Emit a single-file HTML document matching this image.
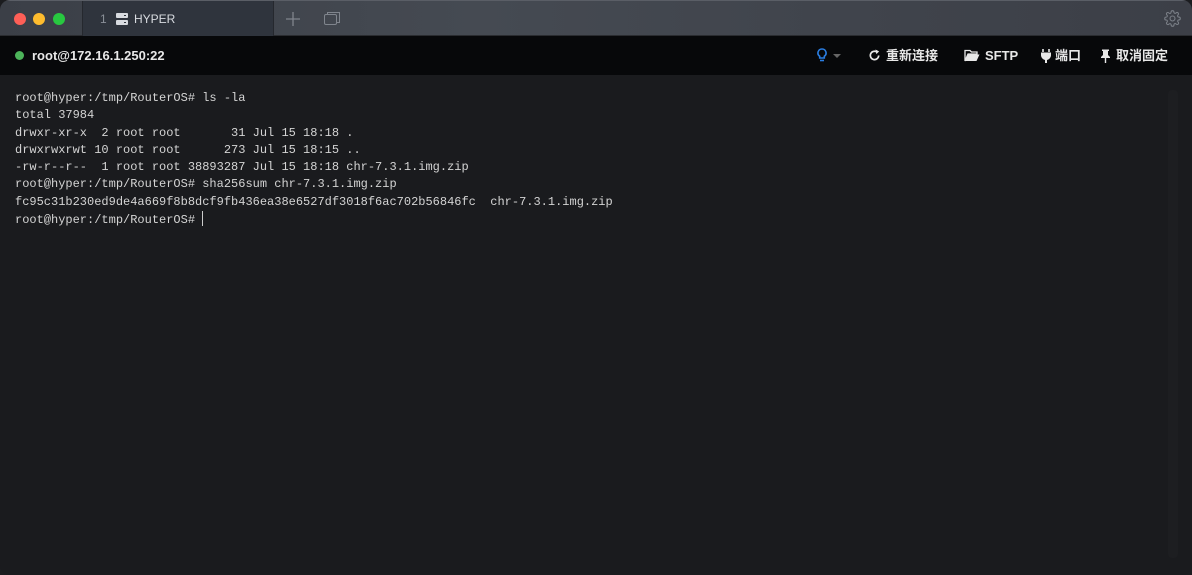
<!DOCTYPE html>
<html><head><meta charset="utf-8"><style>
*{margin:0;padding:0;box-sizing:border-box}
html,body{width:1192px;height:575px;overflow:hidden;background:#1b1c1f}
.win{position:absolute;left:0;top:0;width:1192px;height:575px;border-radius:10px;overflow:hidden;background:#1a1b1e}
.title{position:absolute;left:0;top:0;width:1192px;height:36px;background:linear-gradient(90deg,#3b3f47,#454a52 40%,#40444c 70%,#3c3f47);border-bottom:1px solid #2a2c30;border-top:1px solid #5a5e66}
.dot{position:absolute;top:12px;width:12px;height:12px;border-radius:50%}
.tab{position:absolute;left:82px;top:0;width:192px;height:37px;background:#2f343d;border-left:1px solid #25282e;border-right:1px solid #25282e;font:12px "Liberation Sans",sans-serif;color:#d8dbe0}
.bar{position:absolute;left:0;top:36px;width:1192px;height:39px;background:#07080a;font:bold 13px/17px "Liberation Sans","Noto Sans CJK SC",sans-serif;color:#e8e8e8}
.term{position:absolute;left:15px;top:90px;font:12px/17.3px "Liberation Mono",monospace;color:#d4d4d4;white-space:pre}
.sb{position:absolute;left:1168px;top:90px;width:10px;height:468px;background:#1d1e21;border-radius:4px}
.it{position:absolute;top:11px;height:17px}
.it svg{position:absolute;top:2px;left:0}
.it span{position:absolute;top:0;white-space:nowrap;line-height:17px;height:17px;display:block}
</style></head><body><div class="win">
<div class="title">
<div class="dot" style="left:14px;background:#fe5f57"></div>
<div class="dot" style="left:33px;background:#febc2e"></div>
<div class="dot" style="left:53px;background:#28c840"></div>
<div class="tab"><span style="position:absolute;left:17px;top:11px;color:#8a8f98">1</span>
<svg style="position:absolute;left:33px;top:12px" width="12" height="12"><rect x="0" y="0" width="12" height="5" rx="1" fill="#d8dbe0"/><rect x="0" y="7" width="12" height="5" rx="1" fill="#d8dbe0"/><rect x="8" y="2" width="2" height="1" fill="#2f343d"/><rect x="8" y="9" width="2" height="1" fill="#2f343d"/></svg>
<span style="position:absolute;left:51px;top:11px">HYPER</span></div>
<svg style="position:absolute;left:286px;top:11px" width="14" height="14"><path d="M7 0V14M0 7H14" stroke="#80858d" stroke-width="1.3"/></svg>
<svg style="position:absolute;left:324px;top:10px" width="16" height="15"><rect x="0.5" y="3.5" width="12" height="10" rx="1.5" fill="none" stroke="#80858d"/><path d="M3.5 3.5V1.5H15.5V11.5H12.5" fill="none" stroke="#80858d"/></svg>
<svg style="position:absolute;left:1164px;top:9px" width="17" height="17" viewBox="0 0 24 24"><path d="M12 15.5a3.5 3.5 0 1 0 0-7 3.5 3.5 0 0 0 0 7z M19.4 15a1.7 1.7 0 0 0 .3 1.8l.1.1a2 2 0 1 1-2.8 2.8l-.1-.1a1.7 1.7 0 0 0-1.8-.3 1.7 1.7 0 0 0-1 1.5V21a2 2 0 1 1-4 0v-.1a1.7 1.7 0 0 0-1.1-1.5 1.7 1.7 0 0 0-1.8.3l-.1.1a2 2 0 1 1-2.8-2.8l.1-.1a1.7 1.7 0 0 0 .3-1.8 1.7 1.7 0 0 0-1.500-1H3a2 2 0 1 1 0-4h.1a1.7 1.7 0 0 0 1.5-1.1 1.7 1.7 0 0 0-.3-1.8l-.1-.1a2 2 0 1 1 2.8-2.8l.1.1a1.7 1.7 0 0 0 1.8.3H9a1.7 1.7 0 0 0 1-1.5V3a2 2 0 1 1 4 0v.1a1.7 1.7 0 0 0 1 1.5 1.7 1.7 0 0 0 1.8-.3l.1-.1a2 2 0 1 1 2.8 2.8l-.1.1a1.7 1.7 0 0 0-.3 1.8V9a1.7 1.7 0 0 0 1.5 1H21a2 2 0 1 1 0 4h-.1a1.7 1.7 0 0 0-1.5 1z" fill="none" stroke="#7a7f87" stroke-width="1.5"/></svg>
</div>
<div class="bar">
<div style="position:absolute;left:15px;top:15px;width:9px;height:9px;border-radius:50%;background:#4cb35a"></div>
<span style="position:absolute;left:32px;top:11px">root@172.16.1.250:22</span>
<svg style="position:absolute;left:817px;top:12px" width="10" height="15"><path d="M5 1a4 4 0 0 0-2.3 7.3V10h4.6V8.3A4 4 0 0 0 5 1z" fill="none" stroke="#2a7de1" stroke-width="1.6"/><path d="M3 12.5h4" stroke="#2a7de1" stroke-width="1.6"/></svg>
<svg style="position:absolute;left:833px;top:18px" width="8" height="5"><path d="M0 0H8L4 4z" fill="#666"/></svg>
<div class="it" style="left:868px"><svg width="13" height="13" viewBox="0 0 14 14"><path d="M11.5 7A4.5 4.5 0 1 1 9.5 3.2" fill="none" stroke="#e8e8e8" stroke-width="1.8"/><path d="M8 0.5L12 2.5L9 5.5z" fill="#e8e8e8"/></svg><span style="left:18px">重新连接</span></div>
<div class="it" style="left:964px"><svg width="16" height="13" viewBox="0 0 16 13"><path d="M1 1.5h5l1.5 1.5H13v2H4L1 12z" fill="none" stroke="#e8e8e8" stroke-width="1.3"/><path d="M4 5.5h11.5L12.5 12H1z" fill="#e8e8e8"/></svg><span style="left:21px">SFTP</span></div>
<div class="it" style="left:1040px"><svg width="12" height="14" viewBox="0 0 12 14"><path d="M3 0v3M9 0v3" stroke="#e8e8e8" stroke-width="1.6"/><path d="M1 3.5h10v3a5 5 0 0 1-4 4.5V14H5v-3A5 5 0 0 1 1 6.5z" fill="#e8e8e8"/></svg><span style="left:15px">端口</span></div>
<div class="it" style="left:1100px"><svg width="11" height="14" viewBox="0 0 11 14"><path d="M2 0.5h7v1.5H8v4l2 2v1H1v-1l2-2V2H2z" fill="#e8e8e8"/><path d="M5.5 9v5" stroke="#e8e8e8" stroke-width="1.4"/></svg><span style="left:16px">取消固定</span></div>
</div>
<div class="sb"></div>
<div class="term">root@hyper:/tmp/RouterOS# ls -la
total 37984
drwxr-xr-x  2 root root       31 Jul 15 18:18 .
drwxrwxrwt 10 root root      273 Jul 15 18:15 ..
-rw-r--r--  1 root root 38893287 Jul 15 18:18 chr-7.3.1.img.zip
root@hyper:/tmp/RouterOS# sha256sum chr-7.3.1.img.zip
fc95c31b230ed9de4a669f8b8dcf9fb436ea38e6527df3018f6ac702b56846fc  chr-7.3.1.img.zip
root@hyper:/tmp/RouterOS# <span style="display:inline-block;width:1px;height:15px;background:#ccc;vertical-align:-3px"></span></div>
</div></body></html>
